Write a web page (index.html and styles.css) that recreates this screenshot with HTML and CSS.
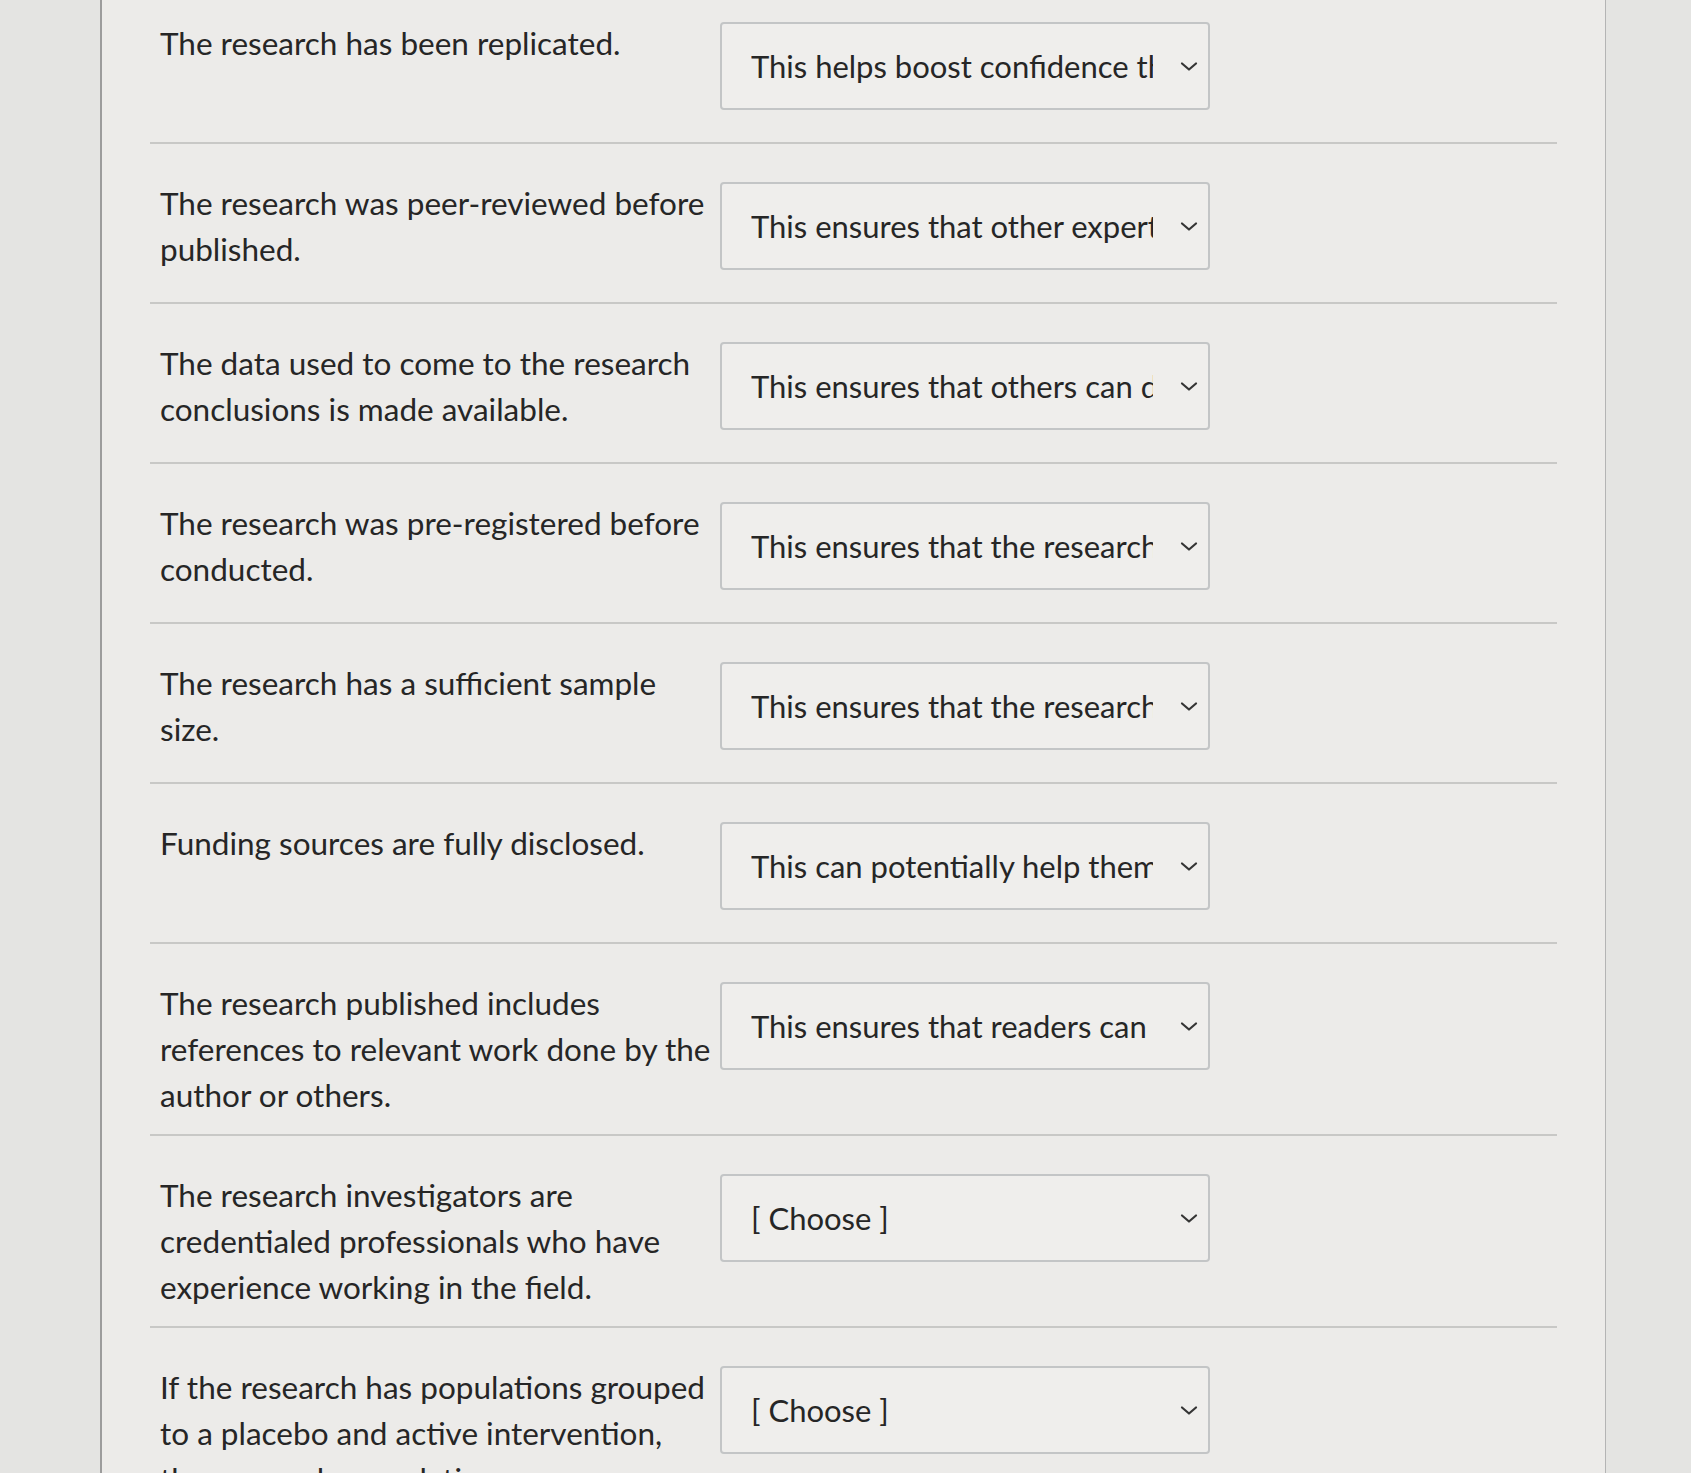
FILE: index.html
```html
<!DOCTYPE html>
<html>
<head>
  <meta charset="utf-8">
  <link rel="stylesheet" href="styles.css">
</head>
<body>
  <div class="panel">
    <div class="match-row">
      <div class="prompt">The research has been replicated.</div>
      <div class="answer-select">
        <span class="answer-text">This helps boost confidence that</span>
        <svg class="chevron" viewBox="0 0 18 10"><path d="M2 2 L9 8 L16 2"/></svg>
      </div>
    </div>

    <div class="match-row">
      <div class="prompt">The research was peer-reviewed before published.</div>
      <div class="answer-select">
        <span class="answer-text">This ensures that other experts</span>
        <svg class="chevron" viewBox="0 0 18 10"><path d="M2 2 L9 8 L16 2"/></svg>
      </div>
    </div>

    <div class="match-row">
      <div class="prompt">The data used to come to the research conclusions is made available.</div>
      <div class="answer-select">
        <span class="answer-text">This ensures that others can do</span>
        <svg class="chevron" viewBox="0 0 18 10"><path d="M2 2 L9 8 L16 2"/></svg>
      </div>
    </div>

    <div class="match-row">
      <div class="prompt">The research was pre-registered before conducted.</div>
      <div class="answer-select">
        <span class="answer-text">This ensures that the research</span>
        <svg class="chevron" viewBox="0 0 18 10"><path d="M2 2 L9 8 L16 2"/></svg>
      </div>
    </div>

    <div class="match-row">
      <div class="prompt">The research has a sufficient sample size.</div>
      <div class="answer-select">
        <span class="answer-text">This ensures that the research</span>
        <svg class="chevron" viewBox="0 0 18 10"><path d="M2 2 L9 8 L16 2"/></svg>
      </div>
    </div>

    <div class="match-row">
      <div class="prompt">Funding sources are fully disclosed.</div>
      <div class="answer-select">
        <span class="answer-text">This can potentially help them</span>
        <svg class="chevron" viewBox="0 0 18 10"><path d="M2 2 L9 8 L16 2"/></svg>
      </div>
    </div>

    <div class="match-row">
      <div class="prompt">The research published includes references to relevant work done by the author or others.</div>
      <div class="answer-select">
        <span class="answer-text">This ensures that readers can</span>
        <svg class="chevron" viewBox="0 0 18 10"><path d="M2 2 L9 8 L16 2"/></svg>
      </div>
    </div>

    <div class="match-row">
      <div class="prompt">The research investigators are credentialed professionals who have experience working in the field.</div>
      <div class="answer-select">
        <span class="answer-text">[ Choose ]</span>
        <svg class="chevron" viewBox="0 0 18 10"><path d="M2 2 L9 8 L16 2"/></svg>
      </div>
    </div>

    <div class="match-row">
      <div class="prompt">If the research has populations grouped to a placebo and active intervention, these sample populations are</div>
      <div class="answer-select">
        <span class="answer-text">[ Choose ]</span>
        <svg class="chevron" viewBox="0 0 18 10"><path d="M2 2 L9 8 L16 2"/></svg>
      </div>
    </div>
  </div>
</body>
</html>
```

FILE: styles.css
```css
body {
  margin: 0;
  background: #e4e4e2;
  font-family: Lato, "Open Sans", sans-serif;
  color: #262626;
  overflow: hidden;
}

.panel {
  margin: -16px 85px 0 100px;
  padding: 0 48px;
  background: #ecebe9;
  border-left: 2px solid #9c9c9c;
  border-right: 1px solid #b4b4b4;
  min-height: 1600px;
}

.match-row {
  display: flex;
  align-items: flex-start;
  padding: 36px 0 16px 10px;
  border-bottom: 2px solid #c8c8c6;
}

.prompt {
  width: 552px;
  font-size: 31.5px;
  line-height: 46px;
}

.answer-select {
  display: flex;
  align-items: center;
  width: 490px;
  height: 88px;
  box-sizing: border-box;
  margin: 2px 0 16px 8px;
  padding: 0 10px 0 29px;
  background: #efeeec;
  border: 2px solid #c3c5c6;
  border-radius: 4px;
  font-size: 31px;
}

.answer-text {
  flex: 1;
  overflow: hidden;
  white-space: nowrap;
  margin-right: 27px;
}

.chevron {
  width: 18px;
  height: 11px;
  fill: none;
  stroke: #353535;
  stroke-width: 2.2;
  stroke-linecap: round;
  stroke-linejoin: round;
}
```
